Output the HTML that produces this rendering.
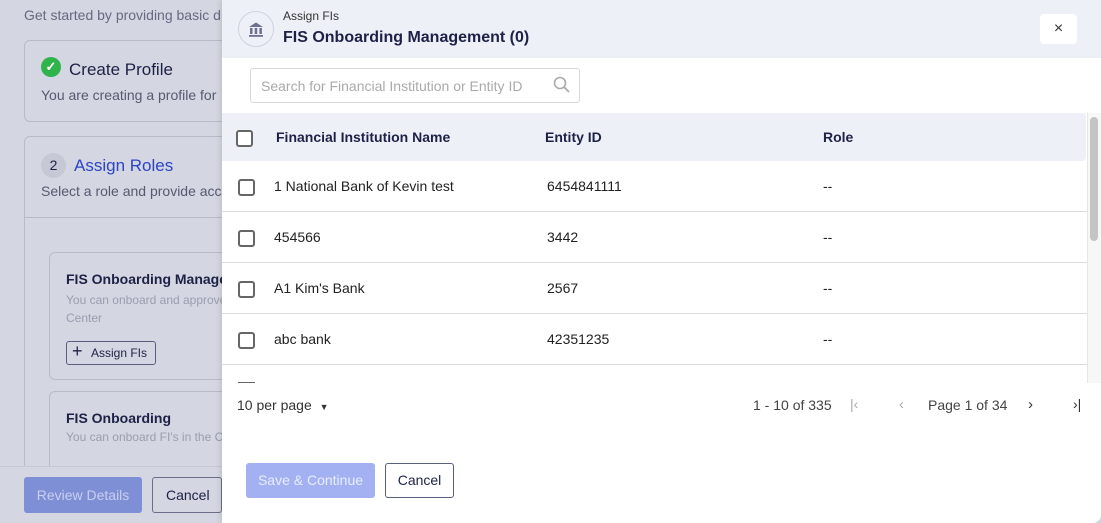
<!DOCTYPE html><html><head><style>
*{box-sizing:border-box;margin:0;padding:0}
body{width:1101px;height:523px;overflow:hidden;position:relative;font-family:"Liberation Sans",sans-serif;background:#d4d6e1;color:#1d2146}
.a{position:absolute}
.card{position:absolute;border:1px solid #b8bbc9;border-radius:6px}
.cb{position:absolute;width:17px;height:17px;border:2px solid #666;border-radius:3px;background:#fff}
.row{position:absolute;left:222px;width:865px;height:51px;border-bottom:1px solid #dcdcdc;font-size:14px;color:#222}
.row span{position:absolute;top:17px}
</style></head><body>
<div class="a" style="left:24px;top:7px;font-size:14px;color:#666a80">Get started by providing basic d</div>
<div class="card" style="left:24px;top:40px;width:260px;height:82px"></div>
<div class="a" style="left:41px;top:57px;width:20px;height:20px;border-radius:50%;background:#2fb34a;color:#fff;font-size:13px;text-align:center;line-height:20px;font-weight:bold">✓</div>
<div class="a" style="left:69px;top:60px;font-size:17px;color:#1d2146">Create Profile</div>
<div class="a" style="left:41px;top:87px;font-size:14px;color:#555a70">You are creating a profile for</div>
<div class="card" style="left:24px;top:136px;width:260px;height:360px"></div>
<div class="a" style="left:24px;top:217px;width:200px;height:1px;background:#b8bbc9"></div>
<div class="a" style="left:41px;top:153px;width:25px;height:25px;border-radius:50%;background:#c6c8d5;font-size:14px;text-align:center;line-height:25px">2</div>
<div class="a" style="left:74px;top:156px;font-size:17px;color:#2c45c8">Assign Roles</div>
<div class="a" style="left:41px;top:183px;font-size:14px;color:#555a70">Select a role and provide acc</div>
<div class="card" style="left:49px;top:252px;width:200px;height:128px"></div>
<div class="a" style="left:66px;top:271px;font-size:14px;font-weight:bold">FIS Onboarding Manager</div>
<div class="a" style="left:66px;top:291px;font-size:12px;color:#9a9db0;line-height:18px">You can onboard and approve<br>Center</div>
<div class="a" style="left:66px;top:341px;width:90px;height:24px;border:1px solid #5a5f80;border-radius:3px;font-size:12px;line-height:22px;padding-left:24px">Assign FIs<span class="a" style="left:5px;top:-2px;font-size:18px">+</span></div>
<div class="card" style="left:49px;top:391px;width:200px;height:128px"></div>
<div class="a" style="left:66px;top:410px;font-size:14px;font-weight:bold">FIS Onboarding</div>
<div class="a" style="left:66px;top:430px;font-size:12px;color:#9a9db0">You can onboard FI's in the C</div>
<div class="a" style="left:0;top:466px;width:222px;height:57px;background:#d4d6e1;border-top:1px solid #c6c8d4"></div>
<div class="a" style="left:24px;top:477px;width:118px;height:36px;background:#7f8fd6;border-radius:3px;color:#c8cff0;font-size:14px;text-align:center;line-height:36px">Review Details</div>
<div class="a" style="left:152px;top:477px;width:70px;height:36px;border:1px solid #6a6e88;border-radius:3px;font-size:14px;line-height:34px;padding-left:13px">Cancel</div>

<div class="a" style="left:222px;top:0;width:879px;height:523px;background:#fff;border-radius:0 0 8px 0;box-shadow:-2px 0 6px rgba(0,0,0,.1)"></div>
<div class="a" style="left:222px;top:0;width:879px;height:58px;background:#eef0f8"></div>
<div class="a" style="left:238px;top:11px;width:36px;height:36px;border-radius:50%;border:1px solid #cfd1dc;background:#eef0f8">
<svg width="34" height="34" viewBox="0 0 34 34" style="position:absolute;left:0;top:0"><path d="M10 15 L17 10.5 L24 15 Z" fill="#6d7090"/><rect x="11" y="16" width="2.5" height="6" fill="#6d7090"/><rect x="15.7" y="16" width="2.5" height="6" fill="#6d7090"/><rect x="20.4" y="16" width="2.5" height="6" fill="#6d7090"/><rect x="10" y="23" width="14" height="1.8" fill="#6d7090"/></svg></div>
<div class="a" style="left:283px;top:9px;font-size:12px;color:#333">Assign FIs</div>
<div class="a" style="left:283px;top:29px;font-size:16px;font-weight:bold;color:#1d2146">FIS Onboarding Management (0)</div>
<div class="a" style="left:1040px;top:14px;width:37px;height:30px;background:#fff;border-radius:4px;text-align:center;line-height:30px;font-size:16px;color:#333">×</div>
<div class="a" style="left:250px;top:68px;width:330px;height:35px;border:1px solid #d8d8dc;border-radius:3px;font-size:14px;color:#aaa;padding:9px 10px">Search for Financial Institution or Entity ID</div>
<svg class="a" style="left:552px;top:75px" width="20" height="20" viewBox="0 0 20 20"><circle cx="8" cy="8" r="5.5" fill="none" stroke="#aaa" stroke-width="1.6"/><path d="M12 12 L17 17" stroke="#aaa" stroke-width="1.8"/></svg>
<div class="a" style="left:222px;top:113px;width:864px;height:48px;background:#eef0f8;border-radius:0 4px 4px 0"></div>
<div class="cb" style="left:236px;top:130px"></div>
<div class="a" style="left:276px;top:129px;font-size:14px;font-weight:bold">Financial Institution Name</div>
<div class="a" style="left:545px;top:129px;font-size:14px;font-weight:bold">Entity ID</div>
<div class="a" style="left:823px;top:129px;font-size:14px;font-weight:bold">Role</div>
<div class="row" style="top:161px"><div class="cb" style="left:16px;top:18px"></div><span style="left:52px">1 National Bank of Kevin test</span><span style="left:325px">6454841111</span><span style="left:601px">--</span></div>
<div class="row" style="top:212px"><div class="cb" style="left:16px;top:18px"></div><span style="left:52px">454566</span><span style="left:325px">3442</span><span style="left:601px">--</span></div>
<div class="row" style="top:263px"><div class="cb" style="left:16px;top:18px"></div><span style="left:52px">A1 Kim's Bank</span><span style="left:325px">2567</span><span style="left:601px">--</span></div>
<div class="row" style="top:314px"><div class="cb" style="left:16px;top:18px"></div><span style="left:52px">abc bank</span><span style="left:325px">42351235</span><span style="left:601px">--</span></div>
<div class="a" style="left:238px;top:382px;width:17px;height:1px;background:#666"></div>
<div class="a" style="left:1087px;top:113px;width:14px;height:270px;background:#f7f7f7;border-left:1px solid #e6e6e6"></div>
<div class="a" style="left:1090px;top:117px;width:8px;height:124px;background:#c4c4c4;border-radius:4px"></div>
<div class="a" style="left:237px;top:397px;font-size:14px;color:#333">10 per page <span style="font-size:9px;margin-left:4px">▼</span></div>
<div class="a" style="left:753px;top:397px;font-size:14px;color:#444">1 - 10 of 335</div>
<div class="a" style="left:850px;top:396px;font-size:14px;color:#aaa">|‹</div>
<div class="a" style="left:899px;top:396px;font-size:15px;color:#aaa">‹</div>
<div class="a" style="left:928px;top:397px;font-size:14px;color:#444">Page 1 of 34</div>
<div class="a" style="left:1028px;top:396px;font-size:15px;color:#333">›</div>
<div class="a" style="left:1073px;top:396px;font-size:14px;color:#333">›|</div>
<div class="a" style="left:246px;top:463px;width:129px;height:35px;background:#a3b1f2;border-radius:3px;color:#e8ecfc;font-size:14px;text-align:center;line-height:35px">Save &amp; Continue</div>
<div class="a" style="left:385px;top:463px;width:69px;height:35px;border:1px solid #5a5f80;border-radius:3px;font-size:14px;text-align:center;line-height:33px">Cancel</div>
</body></html>
